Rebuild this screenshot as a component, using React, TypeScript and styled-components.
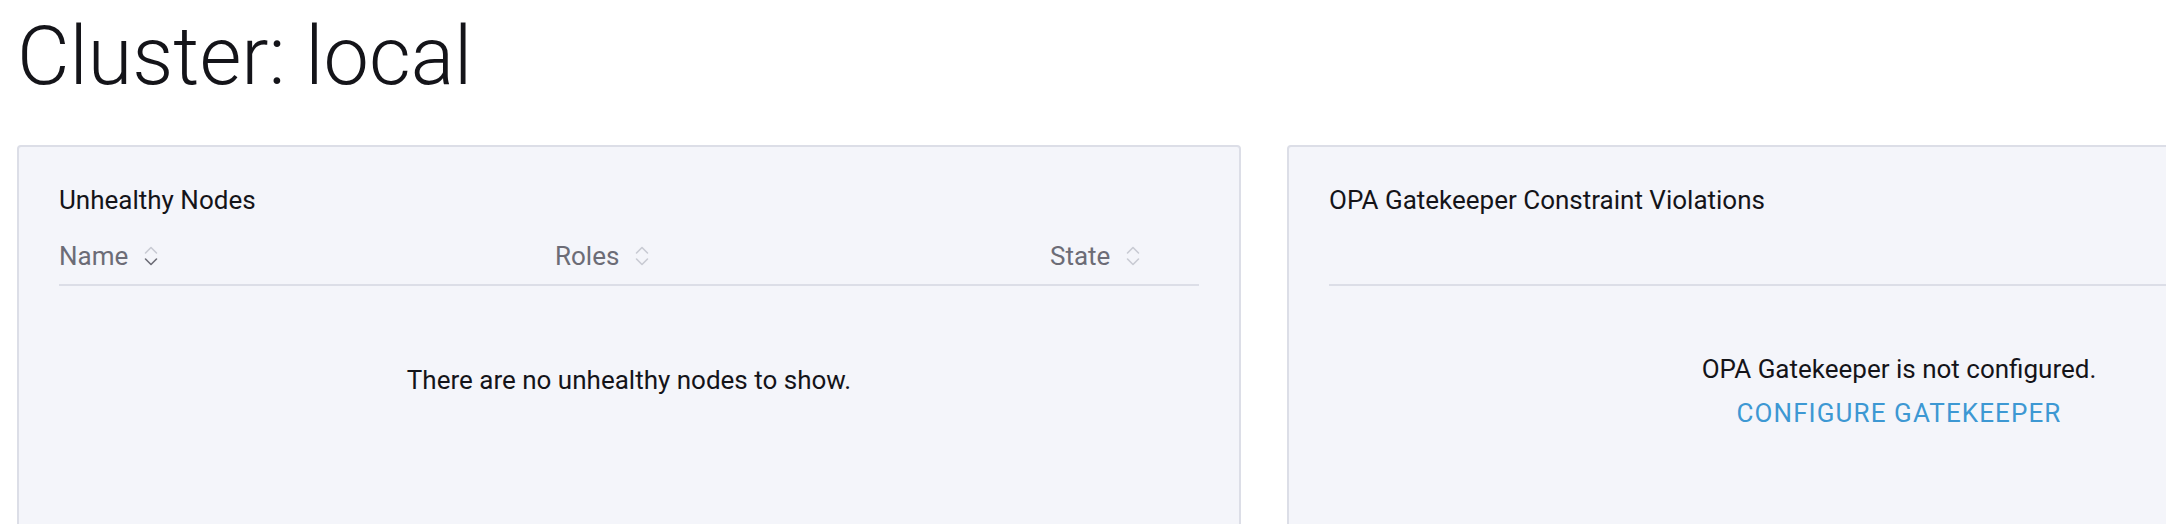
import React from 'react';
import styled, { createGlobalStyle } from 'styled-components';

const GlobalStyle = createGlobalStyle`
  html, body {
    margin: 0;
    padding: 0;
    background: #ffffff;
    overflow: hidden;
  }
  body {
    font-family: Roboto, "Liberation Sans", sans-serif;
    color: #141419;
  }
`;

const Page = styled.div`
  padding: 9px 17px 0;
`;

const Title = styled.h1`
  margin: 0 0 40px;
  font-size: 81px;
  font-weight: 300;
  line-height: 96px;
  color: #141419;
`;

const PanelRow = styled.div`
  display: grid;
  grid-template-columns: 1224px 1224px;
  gap: 46px;
`;

const Panel = styled.section`
  box-sizing: border-box;
  min-height: 420px;
  padding: 35px 40px 40px;
  background: #f4f5fa;
  border: 2px solid #dcdee7;
  border-radius: 4px;
`;

const PanelTitle = styled.h3`
  margin: 0;
  font-size: 26px;
  font-weight: 400;
  line-height: 36px;
  color: #141419;
`;

const HeaderRow = styled.div`
  display: grid;
  grid-template-columns: 496px 495px 1fr;
  height: 68px;
  align-items: end;
  padding-bottom: 10px;
  box-sizing: border-box;
  border-bottom: 2px solid #dcdee7;
`;

const HeaderCell = styled.div`
  display: flex;
  align-items: center;
  gap: 15px;
  font-size: 26px;
  line-height: 36px;
  color: #6c6c76;
`;

const SortIcon = styled.svg`
  width: 16px;
  height: 22px;
  flex: none;
`;

const EmptyBody = styled.div<{ $top: number }>`
  display: flex;
  flex-direction: column;
  align-items: center;
  gap: 8px;
  padding-top: ${({ $top }) => $top}px;
`;

const Message = styled.p`
  margin: 0;
  font-size: 26px;
  line-height: 36px;
  color: #141419;
`;

const ConfigureLink = styled.a`
  font-size: 26px;
  line-height: 36px;
  letter-spacing: 1.1px;
  text-transform: uppercase;
  color: #3d98d3;
  text-decoration: none;
  cursor: pointer;
`;

const Sort: React.FC<{ active?: boolean }> = ({ active }) => (
  <SortIcon viewBox="0 0 16 22" fill="none" strokeWidth="1.6" strokeLinecap="round" strokeLinejoin="round">
    <path d="M2.5 8 L8 2.5 L13.5 8" stroke="#c8cad3" />
    <path d="M2.5 14 L8 19.5 L13.5 14" stroke={active ? '#6c6c76' : '#c8cad3'} />
  </SortIcon>
);

const columns = [
  { label: 'Name', active: true },
  { label: 'Roles', active: false },
  { label: 'State', active: false },
];

export default function App() {
  return (
    <>
      <GlobalStyle />
      <Page>
        <Title>Cluster: local</Title>
        <PanelRow>
          <Panel>
            <PanelTitle>Unhealthy Nodes</PanelTitle>
            <HeaderRow>
              {columns.map((c) => (
                <HeaderCell key={c.label}>
                  {c.label}
                  <Sort active={c.active} />
                </HeaderCell>
              ))}
            </HeaderRow>
            <EmptyBody $top={76}>
              <Message>There are no unhealthy nodes to show.</Message>
            </EmptyBody>
          </Panel>
          <Panel>
            <PanelTitle>OPA Gatekeeper Constraint Violations</PanelTitle>
            <HeaderRow />
            <EmptyBody $top={65}>
              <Message>OPA Gatekeeper is not configured.</Message>
              <ConfigureLink>Configure Gatekeeper</ConfigureLink>
            </EmptyBody>
          </Panel>
        </PanelRow>
      </Page>
    </>
  );
}
